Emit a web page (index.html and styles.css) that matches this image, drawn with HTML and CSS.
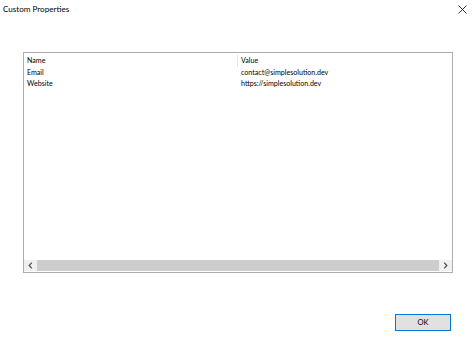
FILE: index.html
```html
<!DOCTYPE html>
<html>
<head>
<meta charset="utf-8">
<link rel="stylesheet" href="styles.css">
</head>
<body>
<div class="dialog">
  <div class="titlebar">
    <span class="title">Custom Properties</span>
    <span class="close"><svg width="9" height="9" viewBox="0 0 9 9"><path d="M0.5 0.5L8.5 8.5M8.5 0.5L0.5 8.5" stroke="#333" stroke-width="1" fill="none"/></svg></span>
  </div>
  <div class="content">
    <div class="listview">
      <div class="rows">
        <div class="row header">
          <div class="col name">Name</div>
          <div class="col value">Value</div>
        </div>
        <div class="row">
          <div class="col name">Email</div>
          <div class="col value">contact@simplesolution.dev</div>
        </div>
        <div class="row">
          <div class="col name">Website</div>
          <div class="col value">https://simplesolution.dev</div>
        </div>
      </div>
      <div class="hscroll">
        <div class="arrow"><svg width="5" height="7" viewBox="0 0 5 7"><path d="M3.8 0.6L1.2 3.5L3.8 6.4" stroke="#555" stroke-width="1.3" fill="none"/></svg></div>
        <div class="thumb"></div>
        <div class="arrow"><svg width="5" height="7" viewBox="0 0 5 7"><path d="M1.2 0.6L3.8 3.5L1.2 6.4" stroke="#555" stroke-width="1.3" fill="none"/></svg></div>
      </div>
    </div>
  </div>
  <div class="footer">
    <button class="ok">OK</button>
  </div>
</div>
</body>
</html>
```
FILE: styles.css
```css
html, body {
  margin: 0;
  padding: 0;
  background: #ffffff;
}
body {
  font-family: Lato, "Open Sans", sans-serif;
  font-size: 7.1px;
  color: #000;
  width: 474px;
  height: 342px;
  overflow: hidden;
}
.dialog {
  display: flex;
  flex-direction: column;
  height: 342px;
}
.titlebar {
  display: flex;
  align-items: center;
  justify-content: space-between;
  height: 18px;
  padding: 0 7px 0 3px;
}
.title {
  font-size: 8.1px;
  color: #000;
}
.close {
  display: flex;
  width: 9px;
  height: 9px;
}
.content {
  padding: 34px 21px 0 23px;
}
.listview {
  box-sizing: border-box;
  height: 221px;
  border: 1px solid #adadad;
  display: flex;
  flex-direction: column;
}
.rows {
  flex: 1;
}
.row {
  display: flex;
  height: 11.5px;
  line-height: 11.5px;
}
.row.header {
  margin-top: 2px;
  height: 11.5px;
}
.col.name {
  width: 214px;
  padding-left: 3px;
  box-sizing: border-box;
}
.col.value {
  padding-left: 3px;
}
.row.header .col.name {
  border-right: 1px solid #e5e5e5;
}
.hscroll {
  display: flex;
  height: 11px;
  margin: 0 0 1px 0;
  background: #f0f0f0;
}
.arrow {
  width: 13px;
  display: flex;
  align-items: center;
  justify-content: center;
}
.thumb {
  flex: 1;
  background: #cdcdcd;
}
.footer {
  display: flex;
  justify-content: flex-end;
  padding: 41px 23px 0 0;
}
.ok {
  width: 56px;
  height: 17px;
  box-sizing: border-box;
  border: 1px solid #0078d7;
  background: #e1e1e1;
  font-family: Lato, "Open Sans", sans-serif;
  font-size: 7.5px;
  color: #000;
  padding: 0;
}
```
